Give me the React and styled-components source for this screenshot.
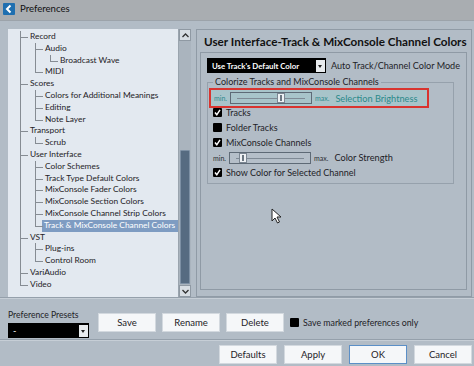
import React from 'react';
import styled, { createGlobalStyle, css } from 'styled-components';

const GlobalStyle = createGlobalStyle`
  html, body {
    margin: 0;
    padding: 0;
    background: #b2bcc6;
  }
  body {
    font-family: Lato, "Noto Sans", "Liberation Sans", sans-serif;
    font-size: 9px;
    color: #1e2226;
  }
`;

const treeItems = [
  ['Record', 1],
  ['Audio', 2],
  ['Broadcast Wave', 3],
  ['MIDI', 2],
  ['Scores', 1],
  ['Colors for Additional Meanings', 2],
  ['Editing', 2],
  ['Note Layer', 2],
  ['Transport', 1],
  ['Scrub', 2],
  ['User Interface', 1],
  ['Color Schemes', 2],
  ['Track Type Default Colors', 2],
  ['MixConsole Fader Colors', 2],
  ['MixConsole Section Colors', 2],
  ['MixConsole Channel Strip Colors', 2],
  ['Track & MixConsole Channel Colors', 2, true],
  ['VST', 1],
  ['Plug-ins', 2],
  ['Control Room', 2],
  ['VariAudio', 1],
  ['Video', 1],
];

// does the node at index i (at level lvl) have a later sibling?
const hasNext = (i, lvl) => {
  for (let j = i + 1; j < treeItems.length; j++) {
    if (treeItems[j][1] < lvl) return false;
    if (treeItems[j][1] === lvl) return true;
  }
  return false;
};

const guidesFor = i => {
  const lvl = treeItems[i][1];
  const out = [];
  for (let k = 1; k <= lvl; k++) {
    let a = i;
    while (treeItems[a][1] !== k) a--;
    const next = hasNext(a, k);
    if (k === lvl) out.push(next ? 'tee' : 'elbow');
    else out.push(next ? 'pipe' : 'blank');
  }
  return out;
};

const App = () => {
  return (
    <Window>
      <GlobalStyle />
      <TitleBar>
        <AppIcon>
          <svg width="12" height="12" viewBox="0 0 12 12">
            <rect width="12" height="12" rx="1" fill="#1f6fb0" />
            <path d="M7.5 2.5 L4 6 L7.5 9.5" stroke="#fff" strokeWidth="2" fill="none" />
          </svg>
        </AppIcon>
        <Title>Preferences</Title>
      </TitleBar>

      <Main>
        <TreeBox>
          <Tree>
            {treeItems.map(([label, lvl, selected], i) => (
              <TreeRow key={label}>
                {guidesFor(i).map((g, k) => (
                  <Guide key={k} kind={g} />
                ))}
                <TreeLabel selected={selected}>{label}</TreeLabel>
              </TreeRow>
            ))}
          </Tree>
          <ScrollBar>
            <ScrollBtn>
              <svg width="7" height="5" viewBox="0 0 7 5">
                <path d="M0.5 4 L3.5 1 L6.5 4" stroke="#333" strokeWidth="1.3" fill="none" />
              </svg>
            </ScrollBtn>
            <ScrollTrack>
              <ScrollThumb />
            </ScrollTrack>
            <ScrollBtn>
              <svg width="7" height="5" viewBox="0 0 7 5">
                <path d="M0.5 1 L3.5 4 L6.5 1" stroke="#333" strokeWidth="1.3" fill="none" />
              </svg>
            </ScrollBtn>
          </ScrollBar>
        </TreeBox>

        <Panel>
          <PanelTitle>User Interface-Track &amp; MixConsole Channel Colors</PanelTitle>
          <Frame>
            <ModeRow>
              <Select width="119px">
                <SelectText bold>Use Track's Default Color</SelectText>
                <SelectArrow />
              </Select>
              <span>Auto Track/Channel Color Mode</span>
            </ModeRow>

            <Group>
              <Legend>Colorize Tracks and MixConsole Channels</Legend>
              <SliderRow highlight>
                <MinMax teal>min.</MinMax>
                <Slider highlight>
                  <Thumb style={{ left: '57%' }} />
                </Slider>
                <MinMax teal>max.</MinMax>
                <SliderLabel teal>Selection Brightness</SliderLabel>
              </SliderRow>
              <Check checked label="Tracks" />
              <Check label="Folder Tracks" />
              <Check checked label="MixConsole Channels" />
              <SliderRow>
                <MinMax>min.</MinMax>
                <Slider>
                  <Thumb style={{ left: '11%' }} />
                </Slider>
                <MinMax>max.</MinMax>
                <SliderLabel>Color Strength</SliderLabel>
              </SliderRow>
              <Check checked label="Show Color for Selected Channel" />
            </Group>
            <Cursor>
              <svg width="12" height="16" viewBox="0 0 12 16">
                <path d="M1 1 L1 13 L4 10 L6.5 15 L8.5 14 L6 9 L10 9 Z" fill="#fff" stroke="#222" strokeWidth="1" />
              </svg>
            </Cursor>
          </Frame>
        </Panel>
      </Main>

      <Presets>
        <PresetCol>
          <PresetLabel>Preference Presets</PresetLabel>
          <Select width="81px">
            <SelectText>-</SelectText>
            <SelectArrow />
          </Select>
        </PresetCol>
        <Button>Save</Button>
        <Button>Rename</Button>
        <Button>Delete</Button>
        <SaveMarked>
          <Box />
          <span>Save marked preferences only</span>
        </SaveMarked>
      </Presets>

      <Actions>
        <Button>Defaults</Button>
        <Button>Apply</Button>
        <Button primary>OK</Button>
        <Button>Cancel</Button>
      </Actions>
    </Window>
  );
};

const Check = ({ checked, label }) => (
  <CheckLine>
    <Box>
      {checked && (
        <svg width="9" height="9" viewBox="0 0 9 9">
          <path d="M2 4.5 L3.8 6.8 L7 1.8" stroke="#fff" strokeWidth="1.5" fill="none" />
        </svg>
      )}
    </Box>
    <span>{label}</span>
  </CheckLine>
);

//Styles
const Window = styled.div`
  width: 474px;
  height: 366px;
  background: #b2bcc6;
  display: flex;
  flex-direction: column;
  overflow: hidden;
`;

const TitleBar = styled.div`
  height: 21px;
  display: flex;
  align-items: center;
  gap: 5px;
  padding: 0 3px;
  background: #a9adb1;
  border-bottom: 1px solid #9ca3aa;
  box-sizing: border-box;
`;

const AppIcon = styled.div`
  display: flex;
  margin-top: -3px;
`;

const Title = styled.div`
  font-size: 9.6px;
  color: #111;
  margin-top: -3px;
`;

const Main = styled.div`
  display: flex;
  gap: 5px;
  padding: 8px 3px 0 8px;
  height: 277px;
  box-sizing: border-box;
  border-bottom: 1px solid #95a0ab;
`;

const TreeBox = styled.div`
  display: flex;
  width: 183px;
  height: 268px;
`;

const Tree = styled.div`
  flex: 1;
  background: #e3e9f0;
  padding-top: 2px;
  overflow: hidden;
`;

const TreeRow = styled.div`
  display: flex;
  align-items: stretch;
  height: 11.8px;
  line-height: 11.8px;
  padding-left: 5px;
  white-space: nowrap;
  font-size: 8.4px;
`;

const Guide = styled.div`
  position: relative;
  width: 15px;
  flex: none;

  &::before,
  &::after {
    content: '';
    position: absolute;
    background: #868c93;
  }

  ${props =>
    (props.kind === 'pipe' || props.kind === 'tee') &&
    css`
      &::before {
        left: 7px;
        top: 0;
        bottom: 0;
        width: 1px;
      }
    `}

  ${props =>
    props.kind === 'elbow' &&
    css`
      &::before {
        left: 7px;
        top: 0;
        height: 6px;
        width: 1px;
      }
    `}

  ${props =>
    (props.kind === 'elbow' || props.kind === 'tee') &&
    css`
      &::after {
        left: 7px;
        top: 6px;
        width: 8px;
        height: 1px;
      }
    `}
`;

const TreeLabel = styled.span`
  padding: 0 2px;
  margin-left: ${props => (props.selected ? '-1px' : '0')};
  padding-right: ${props => (props.selected ? '4px' : '2px')};
  background: ${props => (props.selected ? '#7e9cc2' : 'transparent')};
  color: ${props => (props.selected ? '#fff' : '#1e2226')};
`;

const ScrollBar = styled.div`
  width: 12px;
  display: flex;
  flex-direction: column;
  background: #aab4be;
  border-left: 1px solid #9aa4ae;
`;

const ScrollBtn = styled.div`
  height: 12px;
  display: flex;
  align-items: center;
  justify-content: center;
  background: #d7dde3;
  border: 1px solid #8f99a3;
  box-sizing: border-box;
`;

const ScrollTrack = styled.div`
  flex: 1;
  display: flex;
  flex-direction: column;
  justify-content: flex-end;
  padding: 0 1px 1px;
`;

const ScrollThumb = styled.div`
  height: 132px;
  background: #566b81;
  border: 1px solid #7d90a4;
  border-radius: 1px;
`;

const Panel = styled.div`
  flex: 1;
  border: 1px solid #909ba6;
  padding: 1px 4px 6px 3px;
  display: flex;
  flex-direction: column;
  box-sizing: border-box;
  height: 268px;
`;

const PanelTitle = styled.div`
  font-weight: 700;
  font-size: 11.7px;
  line-height: 14px;
  color: #111;
  padding: 3px 0 4px 4px;
  white-space: nowrap;
`;

const Frame = styled.div`
  flex: 1;
  border: 1px solid #8f9aa5;
  padding: 5px 6px 0 6px;
  position: relative;
`;

const ModeRow = styled.div`
  display: flex;
  align-items: center;
  gap: 5px;
  font-size: 9.1px;
  white-space: nowrap;
`;

const Select = styled.div`
  width: ${props => props.width};
  height: 15px;
  background: #000;
  display: flex;
  align-items: center;
  justify-content: space-between;
  box-sizing: border-box;
  padding: 1px 1px 1px 5px;
`;

const SelectText = styled.span`
  color: #fff;
  font-size: ${props => (props.bold ? '7.8px' : '9px')};
  font-weight: ${props => (props.bold ? 700 : 400)};
`;

const SelectArrow = styled.div`
  width: 9px;
  height: 12px;
  background: #e8ebee;
  position: relative;

  &::after {
    content: '';
    position: absolute;
    left: 2px;
    top: 5px;
    border-left: 2.5px solid transparent;
    border-right: 2.5px solid transparent;
    border-top: 3px solid #222;
  }
`;

const Group = styled.div`
  position: relative;
  margin-top: 9px;
  margin-right: 6px;
  border: 1px solid #96a1ac;
  padding: 7px 0 3px 0;
  display: flex;
  flex-direction: column;
`;

const Legend = styled.div`
  position: absolute;
  top: -7px;
  left: 5px;
  padding: 0 2px;
  background: #b2bcc6;
  font-size: 9px;
  line-height: 12px;
  white-space: nowrap;
`;

const SliderRow = styled.div`
  display: flex;
  align-items: center;
  gap: 3px;
  height: 15px;
  padding-left: 5px;
  white-space: nowrap;
  ${props =>
    props.highlight &&
    css`
      box-sizing: border-box;
      width: 216px;
      height: 16px;
      margin: 0 0 -1px 3px;
      padding-left: 3px;
      background: #a8c4ca;
      outline: 2px solid #d9342f;
    `}
`;

const MinMax = styled.span`
  font-size: 7px;
  color: ${props => (props.teal ? '#2f8a8c' : '#2a2e32')};
`;

const Slider = styled.div`
  position: relative;
  width: 82px;
  height: 12px;
  box-sizing: border-box;
  border: 1px solid #5e6a76;
  background: ${props => (props.highlight ? '#a8c4ca' : '#b5bfc9')};

  &::before {
    content: '';
    position: absolute;
    left: 6px;
    right: 6px;
    top: 5px;
    height: 1px;
    background: #7f8a95;
  }
`;

const Thumb = styled.div`
  position: absolute;
  top: 0;
  width: 8px;
  height: 10px;
  background: #eef1f4;
  border: 1px solid #7b8692;
  box-sizing: border-box;

  &::before {
    content: '';
    position: absolute;
    left: 2px;
    top: 1px;
    bottom: 1px;
    width: 2px;
    border-left: 1px solid #6c7782;
    border-right: 1px solid #6c7782;
    box-sizing: border-box;
  }
`;

const SliderLabel = styled.span`
  margin-left: 3px;
  font-size: 9.2px;
  color: ${props => (props.teal ? '#2b8a8b' : '#1e2226')};
`;

const CheckLine = styled.div`
  display: flex;
  align-items: center;
  gap: 4px;
  font-size: 9px;
  padding-left: 5px;
  height: 15px;
  white-space: nowrap;
`;

const Box = styled.div`
  width: 9px;
  height: 9px;
  background: #000;
  border-radius: 1px;
  display: flex;
  flex: none;
`;

const Cursor = styled.div`
  position: absolute;
  left: 70px;
  top: 155px;
`;

const Presets = styled.div`
  display: flex;
  align-items: flex-start;
  gap: 6px;
  padding: 10px 0 0 8px;
  height: 42px;
  box-sizing: border-box;
  border-top: 1px solid #c6ced6;
  border-bottom: 1px solid #95a0ab;
`;

const PresetCol = styled.div`
  display: flex;
  flex-direction: column;
  gap: 2px;
  margin-right: 3px;
`;

const PresetLabel = styled.div`
  font-size: 8.6px;
  line-height: 12px;
`;

const SaveMarked = styled.div`
  display: flex;
  align-items: center;
  gap: 4px;
  font-size: 8.8px;
  height: 19px;
  margin-top: 4px;
  white-space: nowrap;
`;

const Button = styled.div`
  width: 58px;
  height: 19px;
  flex: none;
  box-sizing: border-box;
  display: flex;
  align-items: center;
  justify-content: center;
  background: #f5f7f9;
  border: 1px solid ${props => (props.primary ? '#5b8fc7' : '#d3d9df')};
  font-size: 9.5px;
  color: #1e2226;
  margin-top: 4px;
`;

const Actions = styled.div`
  display: flex;
  justify-content: flex-end;
  gap: 7px;
  padding: 0 2px 0 0;
  border-top: 1px solid #c6ced6;
`;

export default App;
